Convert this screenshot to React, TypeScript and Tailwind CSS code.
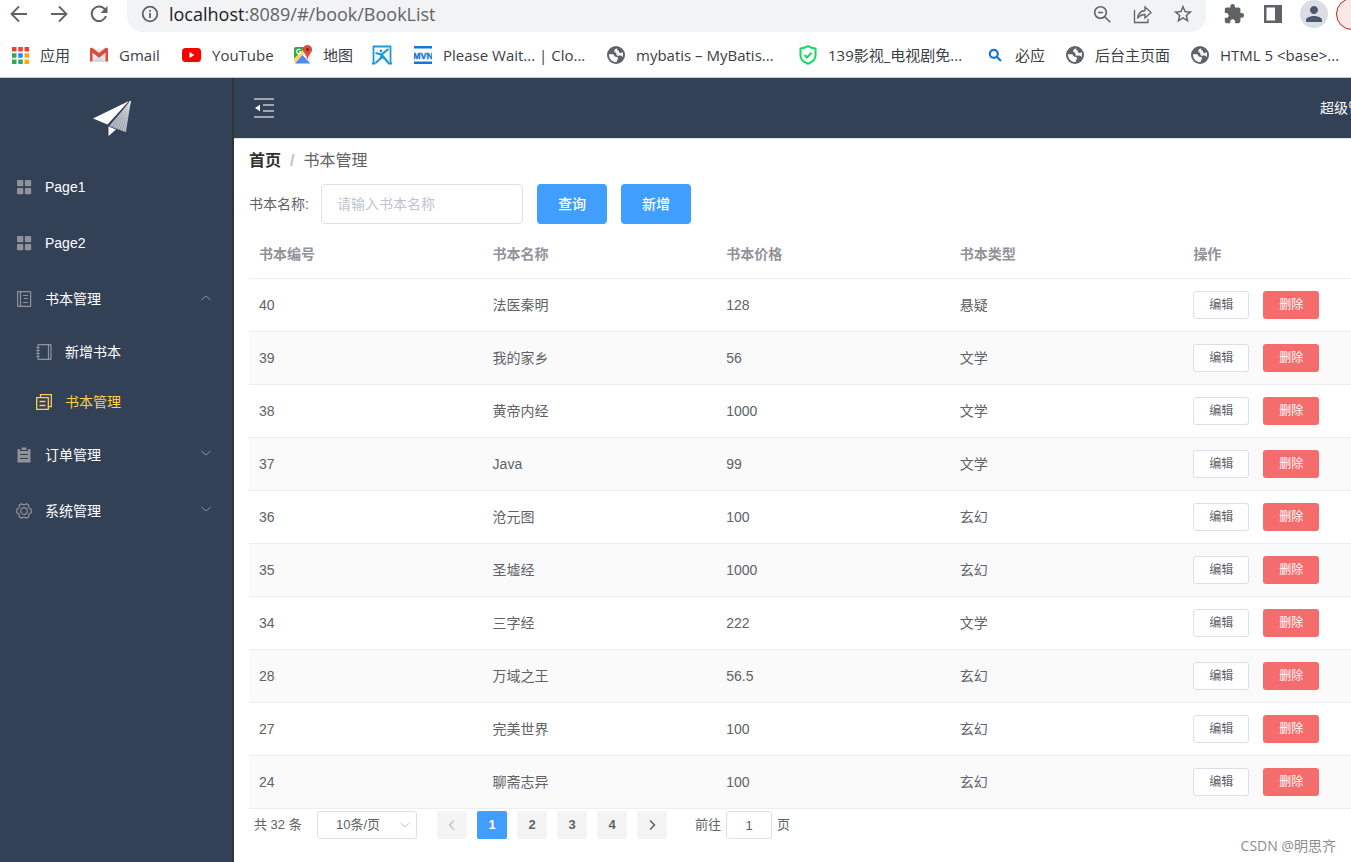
import { useState } from "react";
import type { ReactNode } from "react";
import { MdExtension, MdPerson, MdStarOutline } from "react-icons/md";

interface Book {
  id: number;
  name: string;
  price: number;
  type: string;
}

const books: Book[] = [
  { id: 40, name: "法医秦明", price: 128, type: "悬疑" },
  { id: 39, name: "我的家乡", price: 56, type: "文学" },
  { id: 38, name: "黄帝内经", price: 1000, type: "文学" },
  { id: 37, name: "Java", price: 99, type: "文学" },
  { id: 36, name: "沧元图", price: 100, type: "玄幻" },
  { id: 35, name: "圣墟经", price: 1000, type: "玄幻" },
  { id: 34, name: "三字经", price: 222, type: "文学" },
  { id: 28, name: "万域之王", price: 56.5, type: "玄幻" },
  { id: 27, name: "完美世界", price: 100, type: "玄幻" },
  { id: 24, name: "聊斋志异", price: 100, type: "玄幻" },
];

const columns = ["书本编号", "书本名称", "书本价格", "书本类型", "操作"];

/* ---------- browser icons ---------- */

const AppsIcon = () => (
  <svg viewBox="0 0 17 17" className="size-[17px]">
    <path fill="#ea4335" d="M0 0h4.500v4.500H0zM6.250 0h4.500v4.500h-4.500zM12.500 0H17v4.500h-4.500z" />
    <path fill="#34a853" d="M0 6.250h4.500v4.500H0zM0 12.500h4.500V17H0zM6.250 12.500h4.500V17h-4.500z" />
    <path fill="#1a8cff" d="M6.250 6.250h4.500v4.500h-4.500z" />
    <path fill="#fbab08" d="M12.500 6.250H17v4.500h-4.500zM12.500 12.500H17V17h-4.500z" />
  </svg>
);

const GmailIcon = () => (
  <svg viewBox="0 0 20 16" className="h-4 w-5">
    <path fill="#e9e9e9" d="M3 2h14v13H3z" />
    <path fill="#d9d9d9" d="m3 15 7-6 7 6z" />
    <path fill="#dd4b3e" d="M1 2v12.500h2.500V5.800l6.500 5 6.500-5v8.700H19V2.200C19 .8 17.400.3 16.400 1L10 6 3.600 1C2.600.3 1 .8 1 2z" />
  </svg>
);

const YouTubeIcon = () => (
  <svg viewBox="0 0 20 14" className="h-3.5 w-5">
    <rect width="19" height="14" rx="3.500" fill="#f00" />
    <path fill="#fff" d="M7.500 4v6l5-3z" />
  </svg>
);

const MapIcon = () => (
  <svg viewBox="0 0 20 20" className="size-5">
    <path fill="#34a853" d="M1 4c0-1.200.8-2 2-2h11L1 15z" />
    <path fill="#fdd663" d="M1 13.500 12 3l2 3L2 18l-1-1z" />
    <path fill="#dfe3e8" d="m11 9 7-3v11.500z" />
    <path fill="#4c8bf5" d="m9.500 10 8 8.500H2z" />
    <path fill="#f3f3f3" d="m10 9 2-2 6 6v5z" />
    <path fill="none" stroke="#fff" strokeWidth="1.200" d="M7.500 5.200A2.200 2.200 0 1 0 8 7H6" />
    <path fill="#e04a3f" d="M14.500 0a4.600 4.600 0 0 1 4.600 4.600c0 3.200-3.600 4.600-4.400 9.400h-.5c-.8-4.800-4.300-6.200-4.300-9.400A4.600 4.600 0 0 1 14.500 0z" />
    <circle cx="14.500" cy="4.600" r="1.500" fill="#7c1f17" />
  </svg>
);

const RunnerIcon = () => (
  <svg viewBox="0 0 20 20" className="size-5" fill="none" stroke="#1f9ad6">
    <path strokeWidth="1.800" d="M1.500 19V1.500h17V19M0 18.500h3.500M16 18.500h4" />
    <circle cx="9" cy="6" r="1.400" fill="#1f9ad6" stroke="none" />
    <path strokeWidth="2.200" d="m3.500 8 6 1.500L16.500 4M9.500 9.500 9 13l-5.500 5M9.500 9.500l2.500 3 4.500 5.500M9 13l3-.5" />
  </svg>
);

const MvnIcon = () => (
  <svg viewBox="0 0 18 18" className="size-[18px]">
    <path fill="#1976d9" d="M0 0h18v2.500H0zM0 15.500h18V18H0z" />
    <text
      x="9"
      y="12.500"
      textAnchor="middle"
      fontSize="9"
      fontWeight="700"
      fill="#1976d9"
      stroke="#1976d9"
      strokeWidth=".4"
      fontFamily="Liberation Sans, sans-serif"
    >
      MVN
    </text>
  </svg>
);

const ShieldIcon = () => (
  <svg viewBox="0 0 18 20" className="h-5 w-[18px]" fill="none" stroke="#12dc5f" strokeWidth="2">
    <path d="M9 1.200c2.400 1.600 4.800 2.300 7.500 2.400v7.200c0 3.600-3.700 6.500-7.500 8-3.800-1.500-7.500-4.400-7.500-8V3.600C4.200 3.500 6.600 2.800 9 1.200z" />
    <path d="m5.500 10 2.500 2.500 4.500-4.700" />
  </svg>
);

const BingSearchIcon = () => (
  <svg viewBox="0 0 14 14" className="size-3.5" fill="none" stroke="#1b75d0" strokeWidth="2.200">
    <circle cx="5.800" cy="5.800" r="4" />
    <path d="m9 9 4 4" />
  </svg>
);

const GlobeIcon = () => (
  <svg viewBox="0 0 18 18" className="size-[18px]">
    <circle cx="9" cy="9" r="9" fill="#5f6368" />
    <path
      fill="#fff"
      d="M10.500 2.200C8.500 2.500 7 3.800 7.200 5.200c.2 1.300 1.600 1 2.100 1.900.5 1-.3 1.900.7 2.400 1.300.6 2.800-.4 4.200.3.800.4 1.200 1.200 1.100 2 .9-1.700.9-4 .2-5.700-.8.900-1.900 1.200-2.900.7-1-.6-.4-1.700-1.200-2.400-.5-.4-1.400-.5-1.300-1.200 0-.4.200-.7.400-1z"
    />
    <path
      fill="#fff"
      d="M2 8.200c-.2 4 2.600 7.300 6.600 7.800.9.100 1.400-.4 1.300-1.200-.1-.9.700-1.100 1.100-1.800.5-1-.2-1.900-1.200-2.100-.9-.2-1.700.1-2.300-.6-.7-.8-.4-1.800-1.500-2.100z"
    />
  </svg>
);

interface Bookmark {
  label: string;
  icon: ReactNode;
  width: string;
}

const bookmarks: Bookmark[] = [
  { label: "应用", icon: <AppsIcon />, width: "w-[79px]" },
  { label: "Gmail", icon: <GmailIcon />, width: "w-[93px]" },
  { label: "YouTube", icon: <YouTubeIcon />, width: "w-[111px]" },
  { label: "地图", icon: <MapIcon />, width: "w-[79px]" },
  { label: "", icon: <RunnerIcon />, width: "w-[41px]" },
  { label: "Please Wait... | Clo...", icon: <MvnIcon />, width: "w-[193px]" },
  { label: "mybatis – MyBatis...", icon: <GlobeIcon />, width: "w-[192px]" },
  { label: "139影视_电视剧免...", icon: <ShieldIcon />, width: "w-[187px]" },
  { label: "必应", icon: <BingSearchIcon />, width: "w-[80px]" },
  { label: "后台主页面", icon: <GlobeIcon />, width: "w-[125px]" },
  { label: "HTML 5 <base>...", icon: <GlobeIcon />, width: "w-[170px]" },
];

function BrowserBar() {
  return (
    <div className="h-[78px] overflow-hidden border-b border-[#c5c9d0] bg-white font-['Open_Sans','Noto_Sans_CJK_SC',sans-serif] text-[#3c4043]">
      <div className="flex h-8 items-start">
        <div className="flex h-7 w-[127px] shrink-0 items-center gap-5 pl-[9px] text-[#5f6368]">
          <button aria-label="Back">
            <svg viewBox="0 0 20 20" className="size-5" fill="none" stroke="currentColor" strokeWidth="1.800">
              <path d="M18 10H3M10 2.500 2.500 10l7.500 7.500" />
            </svg>
          </button>
          <button aria-label="Forward">
            <svg viewBox="0 0 20 20" className="size-5" fill="none" stroke="currentColor" strokeWidth="1.800">
              <path d="M2 10h15M10 2.500l7.500 7.500-7.500 7.500" />
            </svg>
          </button>
          <button aria-label="Reload">
            <svg viewBox="0 0 20 20" className="size-5" fill="none" stroke="currentColor" strokeWidth="2">
              <path d="M16 5.500A7.300 7.300 0 1 0 17 12" />
              <path fill="currentColor" stroke="none" d="M18.500 2v7h-7z" />
            </svg>
          </button>
        </div>
        <div className="flex h-8 flex-1 items-center rounded-b-2xl bg-[#f1f3f4] pr-3 pb-1 pl-[14px] text-[#5f6368]">
          <svg viewBox="0 0 18 18" className="size-[18px] shrink-0" fill="none" stroke="currentColor" strokeWidth="1.800">
            <circle cx="9" cy="9" r="7.300" />
            <path d="M9 8v5M9 5v1.800" />
          </svg>
          <p className="ml-[10px] flex-1 text-[18px] leading-7">
            <span className="text-[#202124]">localhost</span>:8089/#/book/BookList
          </p>
          <div className="flex items-center gap-5">
            <button aria-label="Zoom">
              <svg viewBox="0 0 20 20" className="size-5" fill="none" stroke="currentColor" strokeWidth="1.600">
                <circle cx="8.500" cy="8.500" r="5.800" />
                <path d="M6 8.500h5M12.800 12.800l5.400 5.400" />
              </svg>
            </button>
            <button aria-label="Share">
              <svg viewBox="0 0 20 20" className="size-5" fill="none" stroke="currentColor" strokeWidth="1.300">
                <path d="M2.500 6v12.500H16V15" />
                <path d="M13 6.500V3l6 5.500-6 5.500v-3.500c-3.500 0-5.500 1-7.500 4 .5-4.500 3-7.500 7.500-8z" />
              </svg>
            </button>
            <button aria-label="Bookmark">
              <MdStarOutline className="size-[22px]" />
            </button>
          </div>
        </div>
        <div className="flex h-7 w-[145px] shrink-0 items-center pl-[17px] text-[#5f6368]">
          <button aria-label="Extensions" className="shrink-0">
            <MdExtension className="size-[22px]" />
          </button>
          <button aria-label="Side panel" className="ml-[19px] shrink-0">
            <svg viewBox="0 0 18 18" className="size-[18px]">
              <path fill="currentColor" fillRule="evenodd" d="M0 0h18v18H0zM2.500 2.500v13H11v-13z" />
            </svg>
          </button>
          <button
            aria-label="Profile"
            className="ml-[18px] flex size-7 shrink-0 items-center justify-center rounded-full bg-[#dadee4] text-[#4d5870]"
          >
            <MdPerson className="size-6" />
          </button>
          <button aria-label="Update" className="ml-2 h-8 w-20 shrink-0 rounded-full border border-[#c5221f] bg-[#fce8e6]" />
        </div>
      </div>
      <nav className="flex h-[46px] items-center pl-2">
        {bookmarks.map((item, i) => (
          <a key={i} href="#" aria-label={item.label || "bookmark"} className={`flex shrink-0 items-center gap-2 ${item.width}`}>
            <span className="flex w-6 shrink-0 justify-center">{item.icon}</span>
            <span className="text-[15px] leading-5 whitespace-nowrap">{item.label}</span>
          </a>
        ))}
      </nav>
    </div>
  );
}

/* ---------- sidebar icons ---------- */

const GridIcon = () => (
  <svg viewBox="0 0 16 16" className="size-4" fill="currentColor">
    <rect x="1" y="1" width="6.300" height="6.300" rx=".8" />
    <rect x="8.900" y="1" width="6.300" height="6.300" rx=".8" />
    <rect x="1" y="8.900" width="6.300" height="6.300" rx=".8" />
    <rect x="8.900" y="8.900" width="6.300" height="6.300" rx=".8" />
  </svg>
);

const TicketsIcon = () => (
  <svg viewBox="0 0 16 16" className="size-4" fill="none" stroke="currentColor" strokeWidth="1.200">
    <rect x="1.600" y=".6" width="13" height="14.800" rx=".5" />
    <path d="M4.500.5v15M7 4.500h5M8 7.500h4M7 11.500h5" />
  </svg>
);

const NotebookIcon = () => (
  <svg viewBox="0 0 16 16" className="size-4" fill="none" stroke="currentColor" strokeWidth="1.200">
    <rect x="2" y=".6" width="13" height="14.800" rx=".5" />
    <path d="M12.500.5v15M.3 3.500h3.500M.3 6.500h3.500M.3 9.500h3.500M.3 12.500h3.500" />
  </svg>
);

const CopyIcon = () => (
  <svg viewBox="0 0 16 16" className="size-4" fill="none" stroke="currentColor" strokeWidth="1.300">
    <path d="M.7 3.700h11.600v11.600H.7zM4.500 3.700V.7h10.800v12h-3M3.500 7.500h6M3.500 11.500h6" />
  </svg>
);

const OrderIcon = () => (
  <svg viewBox="0 0 16 16" className="size-4">
    <path fill="currentColor" fillRule="evenodd" d="M1.500 2H4v2h8V2h2.500v13.500h-13zM4 7v1h8V7zM4 11v1h8v-1z" />
    <path fill="currentColor" d="M5.500.5h5V3h-5z" />
  </svg>
);

const SettingIcon = () => (
  <svg viewBox="0 0 16 16" className="size-4" fill="none" stroke="currentColor" strokeWidth="1.200">
    <path d="m5.600.8 1 .9h2.800l1-.9 2.300 1.300-.2 1.400 1.300 2.200 1.400.5v3.600l-1.400.5-1.300 2.200.2 1.400-2.300 1.300-1-.9H6.600l-1 .9-2.300-1.300.2-1.400-1.300-2.200-1.400-.5V6.200l1.400-.5 1.300-2.200-.2-1.400z" />
    <circle cx="8" cy="8" r="3.300" />
  </svg>
);

const Chevron = ({ up }: { up?: boolean }) => (
  <svg viewBox="0 0 12 12" className="ml-auto size-3" fill="none" stroke="currentColor">
    <path d={up ? "M1.500 7 6 3l4.500 4" : "M1.500 2 6 6l4.500-4"} />
  </svg>
);

interface MenuItemProps {
  icon: ReactNode;
  label: string;
  sub?: boolean;
  active?: boolean;
  arrow?: "up" | "down";
}

function MenuItem({ icon, label, sub, active, arrow }: MenuItemProps) {
  return (
    <li>
      <a
        href="#"
        className={`flex items-center gap-[13px] pr-5 text-[14px] ${sub ? "h-[50px] pl-9" : "h-14 pl-4"} ${
          active ? "text-[#ffd04b]" : "text-[#909399]"
        }`}
      >
        {icon}
        <span className={active ? "" : "text-white"}>{label}</span>
        {arrow && <Chevron up={arrow === "up"} />}
      </a>
    </li>
  );
}

function Sidebar() {
  return (
    <aside className="w-[234px] shrink-0 border-r-2 border-[#333333] bg-[#334157]">
      <div className="flex h-[81px] items-center justify-center pr-2">
        <svg viewBox="0 0 38 36" className="h-9 w-[38px]">
          <path fill="#fff" d="M0 17.500 36 0 14.500 23.500z" />
          <path fill="#9aa2ae" d="M37.500 0 32.500 31 16 25z" />
          <path
            stroke="#e8eaed"
            strokeWidth=".6"
            d="M37.500 0 18 25.500M37.500 0l-17 26.500M37.500 0 23 27.500M37.500 0 25.500 28.500M37.500 0 28 29.500M37.500 0l-7 30.500M37.500 0l-5 31"
          />
          <path fill="#fff" d="m15.500 25.500 7.500 3-7.500 6.500z" />
        </svg>
      </div>
      <ul>
        <MenuItem icon={<GridIcon />} label="Page1" />
        <MenuItem icon={<GridIcon />} label="Page2" />
        <MenuItem icon={<TicketsIcon />} label="书本管理" arrow="up" />
        <MenuItem icon={<NotebookIcon />} label="新增书本" sub />
        <MenuItem icon={<CopyIcon />} label="书本管理" sub active />
        <MenuItem icon={<OrderIcon />} label="订单管理" arrow="down" />
        <MenuItem icon={<SettingIcon />} label="系统管理" arrow="down" />
      </ul>
    </aside>
  );
}

function BookTable() {
  return (
    <table className="mt-[7px] w-full table-fixed border-separate border-spacing-0 text-left text-[14px]">
      <thead>
        <tr className="text-[#909399]">
          {columns.map((title) => (
            <th key={title} scope="col" className="h-12 border-b border-[#ebeef5] px-[10px] font-bold">
              {title}
            </th>
          ))}
        </tr>
      </thead>
      <tbody>
        {books.map((book) => (
          <tr key={book.id} className="even:bg-[#fafafa]">
            <td className="h-[53px] border-b border-[#ebeef5] px-[10px]">{book.id}</td>
            <td className="border-b border-[#ebeef5] px-[10px]">{book.name}</td>
            <td className="border-b border-[#ebeef5] px-[10px]">{book.price}</td>
            <td className="border-b border-[#ebeef5] px-[10px]">{book.type}</td>
            <td className="border-b border-[#ebeef5] px-[10px]">
              <div className="flex gap-[14px] text-[12px]">
                <button className="h-7 w-14 rounded-[3px] border border-[#dcdfe6] bg-white">编辑</button>
                <button className="h-7 w-14 rounded-[3px] bg-[#f56c6c] text-white">删除</button>
              </div>
            </td>
          </tr>
        ))}
      </tbody>
    </table>
  );
}

function Pagination() {
  const [page, setPage] = useState(1);

  return (
    <div className="flex items-center px-[5px] pt-[2px] text-[13px]">
      <span className="w-[63px]">共 32 条</span>
      <div className="relative">
        <select
          aria-label="每页条数"
          className="h-7 w-[100px] appearance-none rounded-[3px] border border-[#dcdfe6] bg-white pl-[18px]"
        >
          <option>10条/页</option>
        </select>
        <svg viewBox="0 0 12 12" className="pointer-events-none absolute top-2 right-[6px] size-3" fill="none" stroke="#c0c4cc">
          <path d="M1.500 4 6 8l4.500-4" />
        </svg>
      </div>
      <div className="ml-5 flex gap-[10px] font-bold">
        <button
          aria-label="上一页"
          disabled={page === 1}
          onClick={() => setPage(page - 1)}
          className="flex h-7 w-[30px] items-center justify-center rounded-[2px] bg-[#f4f4f5] disabled:text-[#c0c4cc]"
        >
          <svg viewBox="0 0 12 12" className="size-3" fill="none" stroke="currentColor" strokeWidth="1.500">
            <path d="M8 1.500 3.500 6 8 10.500" />
          </svg>
        </button>
        {[1, 2, 3, 4].map((n) => (
          <button
            key={n}
            onClick={() => setPage(n)}
            className={`h-7 w-[30px] rounded-[2px] ${n === page ? "bg-[#409eff] text-white" : "bg-[#f4f4f5]"}`}
          >
            {n}
          </button>
        ))}
        <button
          aria-label="下一页"
          disabled={page === 4}
          onClick={() => setPage(page + 1)}
          className="flex h-7 w-[30px] items-center justify-center rounded-[2px] bg-[#f4f4f5] disabled:text-[#c0c4cc]"
        >
          <svg viewBox="0 0 12 12" className="size-3" fill="none" stroke="currentColor" strokeWidth="1.500">
            <path d="M4 1.500 8.500 6 4 10.500" />
          </svg>
        </button>
      </div>
      <label className="ml-7 flex items-center gap-[5px]">
        前往
        <input
          type="text"
          value={page}
          onChange={(e) => setPage(Number(e.target.value) || 1)}
          className="h-7 w-[46px] rounded-[3px] border border-[#dcdfe6] text-center"
        />
        页
      </label>
    </div>
  );
}

export default function App() {
  const [keyword, setKeyword] = useState("");

  return (
    <div className="relative flex min-h-screen flex-col overflow-hidden bg-white font-['Liberation_Sans','Noto_Sans_CJK_SC',sans-serif] text-[#606266]">
      <BrowserBar />
      <div className="flex flex-1">
        <Sidebar />
        <div className="min-w-[1198px] flex-1">
          <header className="flex h-[61px] items-center border-b border-[#e0e3e8] bg-[#334157] pr-[42px] pl-5 text-[14px] text-white">
            <button aria-label="收起菜单">
              <svg viewBox="0 0 20 20" className="size-5" fill="none" stroke="#c3c8d0" strokeWidth="1.600">
                <path d="M0 1h20M9 7h11M9 13h11M0 19h20" />
                <path fill="#fff" stroke="none" d="m1 10 5-3.300v6.600z" />
              </svg>
            </button>
            <span className="ml-auto">超级管理员</span>
          </header>

          <main className="px-[15px] pt-[10px]">
            <nav className="flex h-6 items-center text-[16px]">
              <a href="#" className="font-bold text-[#303133]">
                首页
              </a>
              <span className="mx-[9px] font-bold text-[#c0c4cc]">/</span>
              <span>书本管理</span>
            </nav>

            <form className="mt-[11px] flex items-center text-[14px]" onSubmit={(e) => e.preventDefault()}>
              <label htmlFor="bookname" className="w-[72px]">
                书本名称:
              </label>
              <input
                id="bookname"
                type="text"
                placeholder="请输入书本名称"
                value={keyword}
                onChange={(e) => setKeyword(e.target.value)}
                className="h-10 w-[202px] rounded border border-[#dcdfe6] px-[15px] placeholder:text-[#c0c4cc]"
              />
              <button className="ml-[14px] h-10 w-[70px] rounded bg-[#409eff] font-medium text-white">查询</button>
              <button type="button" className="ml-[14px] h-10 w-[70px] rounded bg-[#409eff] font-medium text-white">
                新增
              </button>
            </form>

            <BookTable />
            <Pagination />
          </main>
        </div>
      </div>
      <span className="absolute right-[15px] bottom-[6px] font-['Open_Sans','Noto_Sans_CJK_SC',sans-serif] text-[14px] text-[#8c8c8c]">
        CSDN @明思齐
      </span>
    </div>
  );
}
